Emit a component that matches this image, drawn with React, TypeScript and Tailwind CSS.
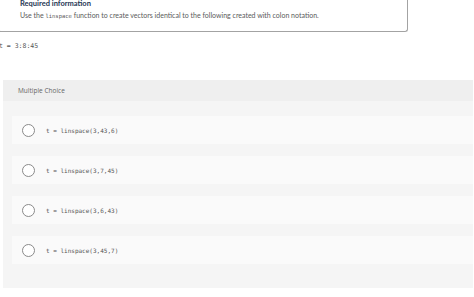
import React from "react";

const OPTIONS = [
  "t = linspace(3,43,6)",
  "t = linspace(3,7,45)",
  "t = linspace(3,6,43)",
  "t = linspace(3,45,7)",
];

export default function App() {
  return (
    <div className="w-[474px] h-[297px] bg-white overflow-hidden relative font-['Lato',sans-serif]">
      {/* required info box */}
      <div className="ml-[-2px] w-[410px] h-[32px] border border-[#a3a3a3] rounded-b-[3px] border-t-0 pl-[21px]">
        <div className="text-[7.5px] leading-[8px] font-bold text-[#1e3553] mt-[0px]">Required information</div>
        <div className="text-[7px] leading-[9px] text-[#5a5a5a] mt-[3px]">
          Use the{" "}
          <span className="font-['DejaVu_Sans_Mono',monospace] text-[5.5px]">linspace</span>{" "}
          function to create vectors identical to the following created with colon notation.
        </div>
      </div>

      <div className="mt-[10px] font-['DejaVu_Sans_Mono',monospace] text-[6.5px] leading-[8px] text-[#555] ml-[-1px]">
        t = 3:8:45
      </div>

      {/* multiple choice panel */}
      <div className="mt-[30px] ml-[3px] w-[470px] h-[208px] bg-[#f5f5f5] flex flex-col">
        <div className="h-[21px] bg-[#efefef] flex items-center pl-[15px] text-[6.5px] text-[#666] font-['Open_Sans',sans-serif]">
          Multiple Choice
        </div>
        <div className="flex flex-col gap-[12px] pt-[15px] pl-[9px]">
          {OPTIONS.map((o) => (
            <div key={o} className="h-[28px] bg-[#fafafa] flex items-center">
              <div className="ml-[10px] w-[13px] h-[13px] rounded-full border border-[#8a8a8a] bg-white" />
              <span className="ml-[11px] font-['DejaVu_Sans_Mono',monospace] text-[6px] text-[#555]">{o}</span>
            </div>
          ))}
        </div>
      </div>
    </div>
  );
}
